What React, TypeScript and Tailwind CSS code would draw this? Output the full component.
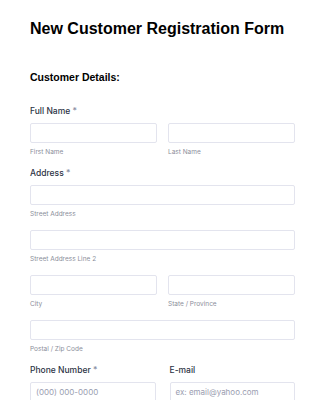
import React from 'react';

const inter = { fontFamily: 'Inter, "Noto Sans", sans-serif' };

function Label({ text, required }: { text: string; required?: boolean }) {
  return (
    <div className="h-[12px] text-[8.5px] leading-[12px] font-medium text-[#2c3345]">
      {text}
      {required && <span className="text-[#8a8fa3]"> *</span>}
    </div>
  );
}

function Input({ placeholder, sub, last }: { placeholder?: string; sub?: string; last?: boolean }) {
  return (
    <div className="flex-1">
      <div className="h-[20px] rounded-[2px] border border-[#e3e4ee] bg-white px-[5px] text-[8px] leading-[18px] text-[#9a9db0]">
        {placeholder}
      </div>
      {sub && (
        <div className={`${last ? 'h-[24px]' : 'h-[25px]'} pt-[5px] text-[6.5px] leading-[9px] text-[#8b8e9a]`}>{sub}</div>
      )}
    </div>
  );
}

function App() {
  return (
    <div className="bg-white min-h-screen px-[30px] pt-[17px]" style={inter}>
      <h1 className="h-[24px] text-[16px] leading-[24px] font-bold text-black" style={{ fontFamily: '"Liberation Sans", Arial, sans-serif' }}>
        New Customer Registration Form
      </h1>
      <h2 className="mt-[28px] h-[16px] text-[10.5px] leading-[16px] font-bold text-black" style={{ fontFamily: '"Liberation Sans", Arial, sans-serif' }}>
        Customer Details:
      </h2>

      <div className="mt-[20px]">
        <Label text="Full Name" required />
        <div className="mt-[6px] flex gap-[11px]">
          <Input sub="First Name" last />
          <Input sub="Last Name" last />
        </div>

        <Label text="Address" required />
        <div className="mt-[6px]">
          <Input sub="Street Address" />
          <Input sub="Street Address Line 2" />
          <div className="flex gap-[11px]">
            <Input sub="City" />
            <Input sub="State / Province" />
          </div>
          <Input sub="Postal / Zip Code" last />
        </div>

        <div className="flex gap-[14px]">
          <div className="flex-1">
            <Label text="Phone Number" required />
            <div className="mt-[6px]">
              <Input placeholder="(000) 000-0000" />
            </div>
          </div>
          <div className="flex-1">
            <Label text="E-mail" />
            <div className="mt-[6px]">
              <Input placeholder="ex: email@yahoo.com" />
            </div>
          </div>
        </div>
      </div>
    </div>
  );
}

export default App;
